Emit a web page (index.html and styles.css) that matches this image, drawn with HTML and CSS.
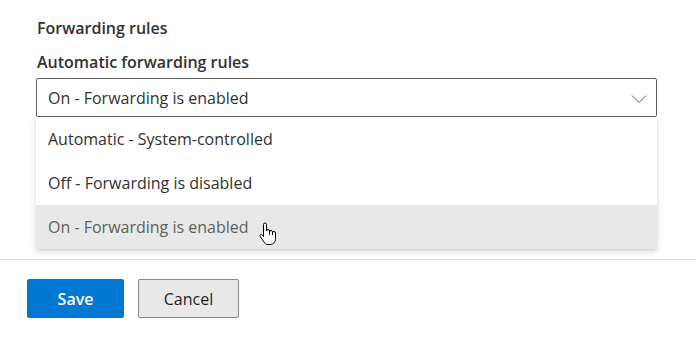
FILE: index.html
```html
<!DOCTYPE html>
<html lang="en">
<head>
<meta charset="utf-8">
<title>Forwarding rules</title>
<link rel="stylesheet" href="styles.css">
</head>
<body>
<div class="panel">
  <section class="content">
    <h2 class="title">Forwarding rules</h2>
    <label class="label">Automatic forwarding rules</label>
    <div class="dropdown">
      <div class="select">
        <span class="select-text">On - Forwarding is enabled</span>
        <svg class="chevron" width="16" height="10" viewBox="0 0 16 10"><path d="M1 1.5 L8 8.5 L15 1.5" fill="none" stroke="#605e5c" stroke-width="1"/></svg>
      </div>
      <ul class="menu">
        <li class="option">Automatic - System-controlled</li>
        <li class="option">Off - Forwarding is disabled</li>
        <li class="option hovered">On - Forwarding is enabled
          <svg class="cursor" width="19" height="24" viewBox="0 0 19 24"><path d="M4.5 2.5 a1.5 1.5 0 0 1 3 0 V9 a1.5 1.5 0 0 1 3 0 V10 a1.5 1.5 0 0 1 3 0 V11 a1.5 1.5 0 0 1 3 0 V16.5 c0 3.5 -2 6 -5.5 6 H9 c-2 0 -3 -1 -4 -2.5 L1.2 14.5 a1.3 1.3 0 0 1 2.1 -1.6 L4.5 14.5 Z M10.5 9.5 V13 M13.5 10.5 V13" fill="#fff" stroke="#000" stroke-width="1" stroke-linejoin="round"/></svg>
        </li>
      </ul>
    </div>
  </section>
  <footer class="footer">
    <button class="btn primary">Save</button>
    <button class="btn secondary">Cancel</button>
  </footer>
</div>
</body>
</html>
```
FILE: styles.css
```css
* { box-sizing: border-box; }
html, body { margin: 0; padding: 0; background: #fff; }
body {
  font-family: "Open Sans", "Noto Sans", "Liberation Sans", sans-serif;
  color: #323130;
  width: 696px;
  height: 337px;
  overflow: hidden;
}
.content {
  padding: 17px 39px 0 36px;
  height: 259px;
}
.title {
  margin: 0 0 0 1px;
  font-size: 16px;
  font-weight: 600;
  line-height: 22px;
}
.label {
  display: block;
  margin: 12px 0 0 1px;
  font-size: 16px;
  font-weight: 600;
  line-height: 22px;
  height: 27px;
}
.dropdown { position: relative; width: 621px; }
.select {
  height: 39px;
  border: 1px solid #605e5c;
  border-radius: 2px;
  display: flex;
  align-items: center;
  justify-content: space-between;
  padding: 0 9px 0 11px;
}
.select-text { font-size: 16px; line-height: 22px; }
.chevron { margin-top: 2px; }
.menu {
  position: absolute;
  left: 0;
  top: 39px;
  width: 621px;
  margin: 0;
  padding: 0;
  list-style: none;
  background: #fff;
  box-shadow: 0 3px 7px rgba(0,0,0,0.13), 0 1px 2px rgba(0,0,0,0.1);
  border-radius: 0 0 2px 2px;
  z-index: 2;
}
.option {
  height: 44px;
  display: flex;
  align-items: center;
  padding-left: 12px;
  font-size: 16px;
  color: #323130;
  position: relative;
}
.option.hovered { background: #e8e8e8; color: #605e5c; }
.cursor { position: absolute; left: 223px; top: 17px; }
.footer {
  border-top: 1px solid #e1dfdd;
  padding: 19px 0 0 27px;
  display: flex;
  gap: 14px;
}
.btn {
  font-family: inherit;
  height: 39px;
  border-radius: 2px;
  font-size: 16px;
  padding: 0;
  cursor: pointer;
}
.primary {
  width: 97px;
  background: #0078d4;
  border: 1px solid #0078d4;
  color: #fff;
  font-weight: 600;
}
.secondary {
  width: 101px;
  background: #e8e8e8;
  border: 1px solid #8a8886;
  color: #201f1e;
  font-weight: 400;
}
```
